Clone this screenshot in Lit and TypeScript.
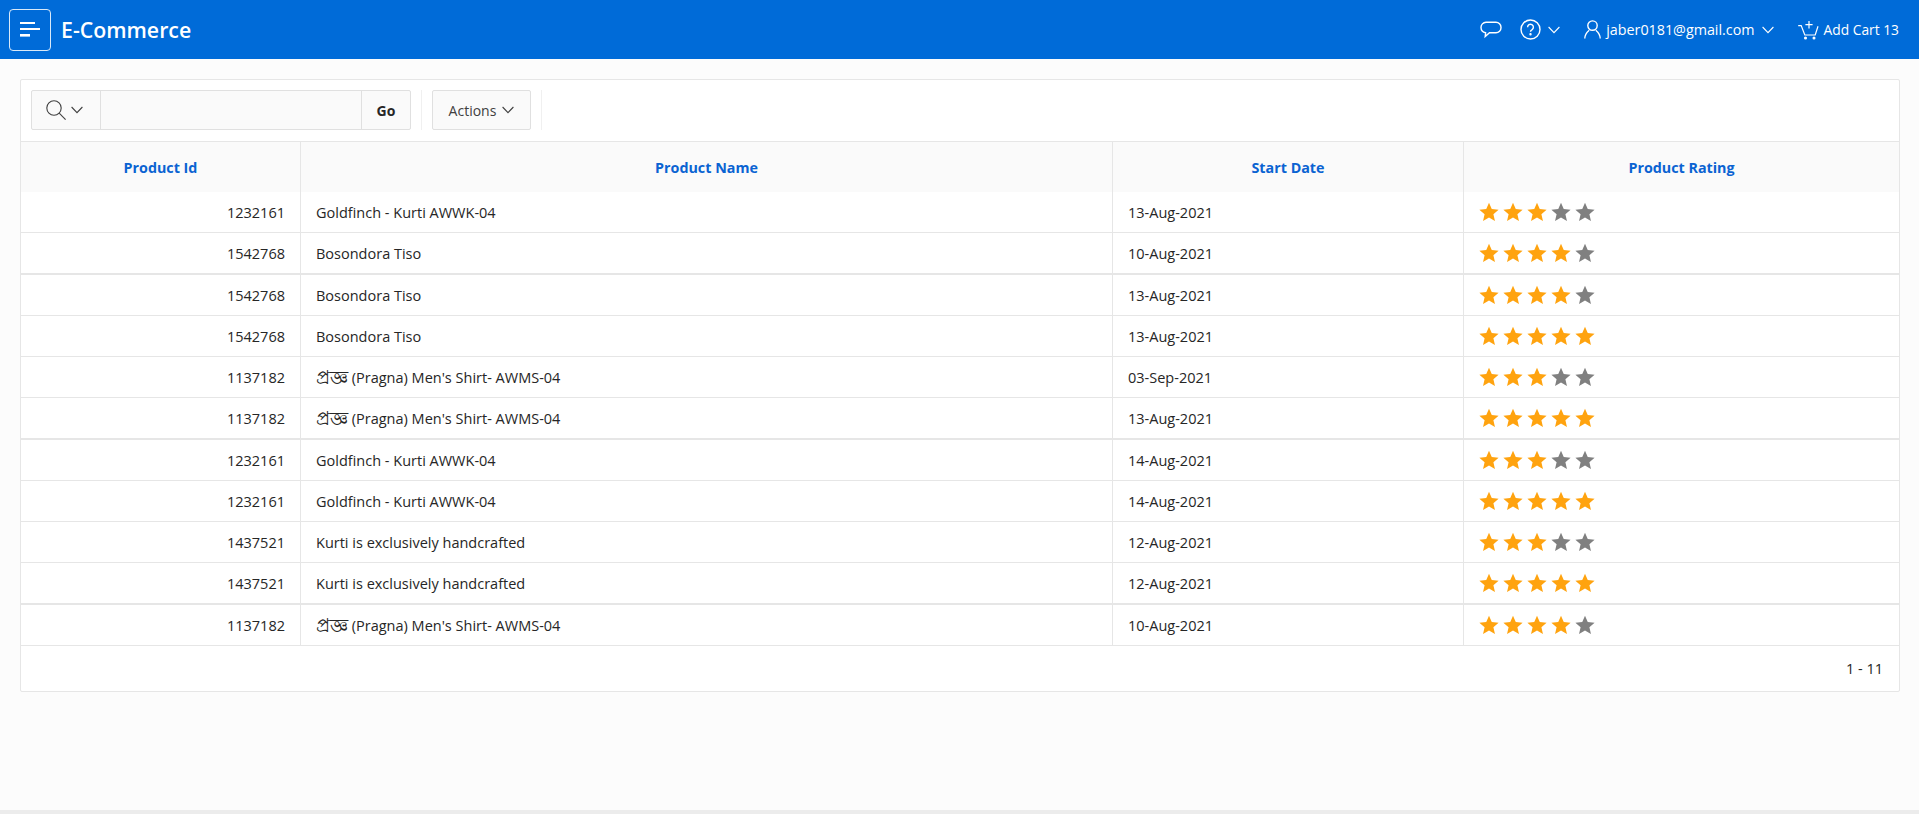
import { LitElement, html, css } from "lit";
import { customElement } from "lit/decorators.js";

const BN = html`<span class="bn">প্রজ্ঞ</span> (Pragna) Men's Shirt- AWMS-04`;
const GF = "Goldfinch - Kurti AWWK-04";
const BT = "Bosondora Tiso";
const KU = "Kurti is exclusively handcrafted";
const rows: [string, unknown, string, number, boolean?][] = [
  ["1232161", GF, "13-Aug-2021", 3],
  ["1542768", BT, "10-Aug-2021", 4, true],
  ["1542768", BT, "13-Aug-2021", 4],
  ["1542768", BT, "13-Aug-2021", 5],
  ["1137182", BN, "03-Sep-2021", 3],
  ["1137182", BN, "13-Aug-2021", 5, true],
  ["1232161", GF, "14-Aug-2021", 3],
  ["1232161", GF, "14-Aug-2021", 5],
  ["1437521", KU, "12-Aug-2021", 3],
  ["1437521", KU, "12-Aug-2021", 5, true],
  ["1137182", BN, "10-Aug-2021", 4],
];

const chevron = () => html`<svg class="chev" width="12" height="8" viewBox="0 0 12 8" fill="none" stroke="currentColor" stroke-width="1.1"><path d="M.6 1 6 6.6 11.4 1"/></svg>`;
const star = (on: boolean) => html`<svg class="star ${on ? "on" : "off"}" width="20" height="20" viewBox="0 0 20 20"><path d="M10 .8l2.75 6.3 6.85.65-5.2 4.5 1.55 6.75L10 15.45 4.05 19l1.55-6.75-5.2-4.5 6.85-.65z"/></svg>`;

@customElement("app-root")
export class AppRoot extends LitElement {
  static styles = css`
    :host { display: block; height: 814px; background: #fcfcfc; font-family: "Open Sans", "Noto Sans", sans-serif; font-size: 14.5px; color: #262626; box-sizing: border-box; border-bottom: 4px solid #ececec; overflow: hidden; }
    .header { height: 59px; background: #006bd8; color: #fff; display: flex; align-items: center; padding: 0 20px 0 9px; font-size: 13.8px; }
    .menu { width: 42px; height: 42px; box-sizing: border-box; border: 1px solid rgba(255,255,255,.85); border-radius: 4px; display: flex; align-items: center; justify-content: center; margin-right: 10px; }
    .menu svg { display: block; }
    .logo { font-size: 21.3px; font-weight: 600; }
    .spacer { flex: 1; }
    .hitem { display: flex; align-items: center; }
    .hitem svg { display: block; }
    .chat { margin-right: 18px; }
    .help { margin-right: 24px; gap: 7px; }
    .user { margin-right: 24px; gap: 5px; font-size: 14.3px; }
    .user .chev { margin-left: 2px; }
    .cart { gap: 5px; }
    .main { padding: 20px 19px 0 20px; }
    .card { background: #fff; border: 1px solid #e6e6e6; border-radius: 2px; }
    .toolbar { height: 62px; box-sizing: border-box; display: flex; align-items: flex-start; padding: 10px 10px 0; border-bottom: 1px solid #e6e6e6; }
    .search { height: 40px; box-sizing: border-box; display: flex; border: 1px solid #e0e0e0; border-radius: 2px; background: #fafafa; }
    .sicon { width: 69px; box-sizing: border-box; display: flex; align-items: center; padding-left: 14px; gap: 5px; color: #404040; border-right: 1px solid #e0e0e0; }
    .sicon svg { display: block; }
    .input { width: 260px; border-right: 1px solid #e0e0e0; }
    .go { width: 48px; display: flex; align-items: center; justify-content: center; font-weight: 700; font-size: 14px; }
    .sep { width: 1px; height: 40px; background: #f0f0f0; margin: 0 10px; }
    .actions { height: 40px; width: 99px; box-sizing: border-box; display: flex; align-items: center; justify-content: center; gap: 6px; border: 1px solid #e0e0e0; border-radius: 2px; background: #fafafa; font-size: 14px; color: #404040; }
    .thead, .row { display: grid; grid-template-columns: 279px 812px 351px 1fr; }
    .thead { height: 50px; background: #fafafa; color: #0a63d2; font-weight: 700; font-size: 14.3px; }
    .thead > div { display: flex; align-items: center; justify-content: center; border-left: 1px solid #e6e6e6; }
    .thead > div:first-child { border-left: none; }
    .row { height: 41px; box-sizing: border-box; border-top: 1px solid #e6e6e6; }
    .row.first { height: 40px; border-top: none; }
    .row.heavy { height: 42px; border-bottom: 1px solid #e6e6e6; }
    .row > div { display: flex; align-items: center; padding: 0 15px; border-left: 1px solid #e6e6e6; white-space: pre; }
    .row > div:first-child { border-left: none; justify-content: flex-end; }
    .bn { font-size: 19px; line-height: 1; }
    .stars { gap: 4px; }
    .star { display: block; }
    .star.on { fill: #ffa30f; }
    .star.off { fill: #808080; }
    .foot { height: 45px; border-top: 1px solid #e6e6e6; display: flex; align-items: center; justify-content: flex-end; padding: 0 16px; }
  `;

  render() {
    return html`
      <div class="header">
        <div class="menu"><svg width="20" height="15" viewBox="0 0 20 15" fill="#fff"><rect width="15" height="2"/><rect width="20" height="2" y="6"/><rect width="10" height="2.6" y="12"/></svg></div>
        <div class="logo">E-Commerce</div>
        <div class="spacer"></div>
        <div class="hitem chat"><svg width="22" height="18" viewBox="0 0 22 18" fill="none" stroke="#fff" stroke-width="1.4"><path d="M6 1.2h10a5 5 0 0 1 5 5v.6a5 5 0 0 1-5 5H9.5l-4.3 3.8.4-3.8A5.4 5.4 0 0 1 1 6.6 5.2 5.2 0 0 1 6 1.2z"/></svg></div>
        <div class="hitem help"><svg width="21" height="21" viewBox="0 0 21 21" fill="none" stroke="#fff" stroke-width="1.4"><circle cx="10.5" cy="10.5" r="9.5"/><path d="M7.6 8.2a2.9 2.9 0 1 1 4.5 2.4c-1 .6-1.6 1.1-1.6 2.2"/><circle cx="10.5" cy="15.2" r=".5" fill="#fff"/></svg>${chevron()}</div>
        <div class="hitem user"><svg width="17" height="19" viewBox="0 0 17 19" fill="none" stroke="#fff" stroke-width="1.4"><circle cx="8.5" cy="5.6" r="4.7"/><path d="M.8 18.6c0-3.8 1.6-6 4.4-8.4M16.2 18.6c0-3.8-1.6-6-4.4-8.4"/></svg><span>jaber0181@gmail.com</span>${chevron()}</div>
        <div class="hitem cart"><svg width="21" height="20" viewBox="0 0 21 20" fill="none" stroke="#fff" stroke-width="1.2"><path d="M.2 5.6h3L6.8 15h10.4L20 6.2M11 1v7.4M7.4 4.6h7.2"/><circle cx="7.5" cy="18" r=".9" fill="#fff"/><circle cx="16" cy="18" r=".9" fill="#fff"/></svg><span>Add Cart 13</span></div>
      </div>
      <div class="main">
        <div class="card">
          <div class="toolbar">
            <div class="search">
              <div class="sicon"><svg width="20" height="20" viewBox="0 0 20 20" fill="none" stroke="currentColor" stroke-width="1.1"><circle cx="8" cy="8" r="7.2"/><path d="M13.2 13.2l6.4 6.4"/></svg>${chevron()}</div>
              <div class="input"></div>
              <div class="go">Go</div>
            </div>
            <div class="sep"></div>
            <div class="actions">Actions ${chevron()}</div>
            <div class="sep"></div>
          </div>
          <div class="thead"><div>Product Id</div><div>Product Name</div><div>Start Date</div><div>Product Rating</div></div>
          ${rows.map((r, idx) => html`<div class="row ${idx === 0 ? "first" : ""} ${r[4] ? "heavy" : ""}"><div>${r[0]}</div><div>${r[1]}</div><div>${r[2]}</div><div class="stars">${[1,2,3,4,5].map(i => star(i <= r[3]))}</div></div>`)}
          <div class="foot">1 - 11</div>
        </div>
      </div>
    `;
  }
}
